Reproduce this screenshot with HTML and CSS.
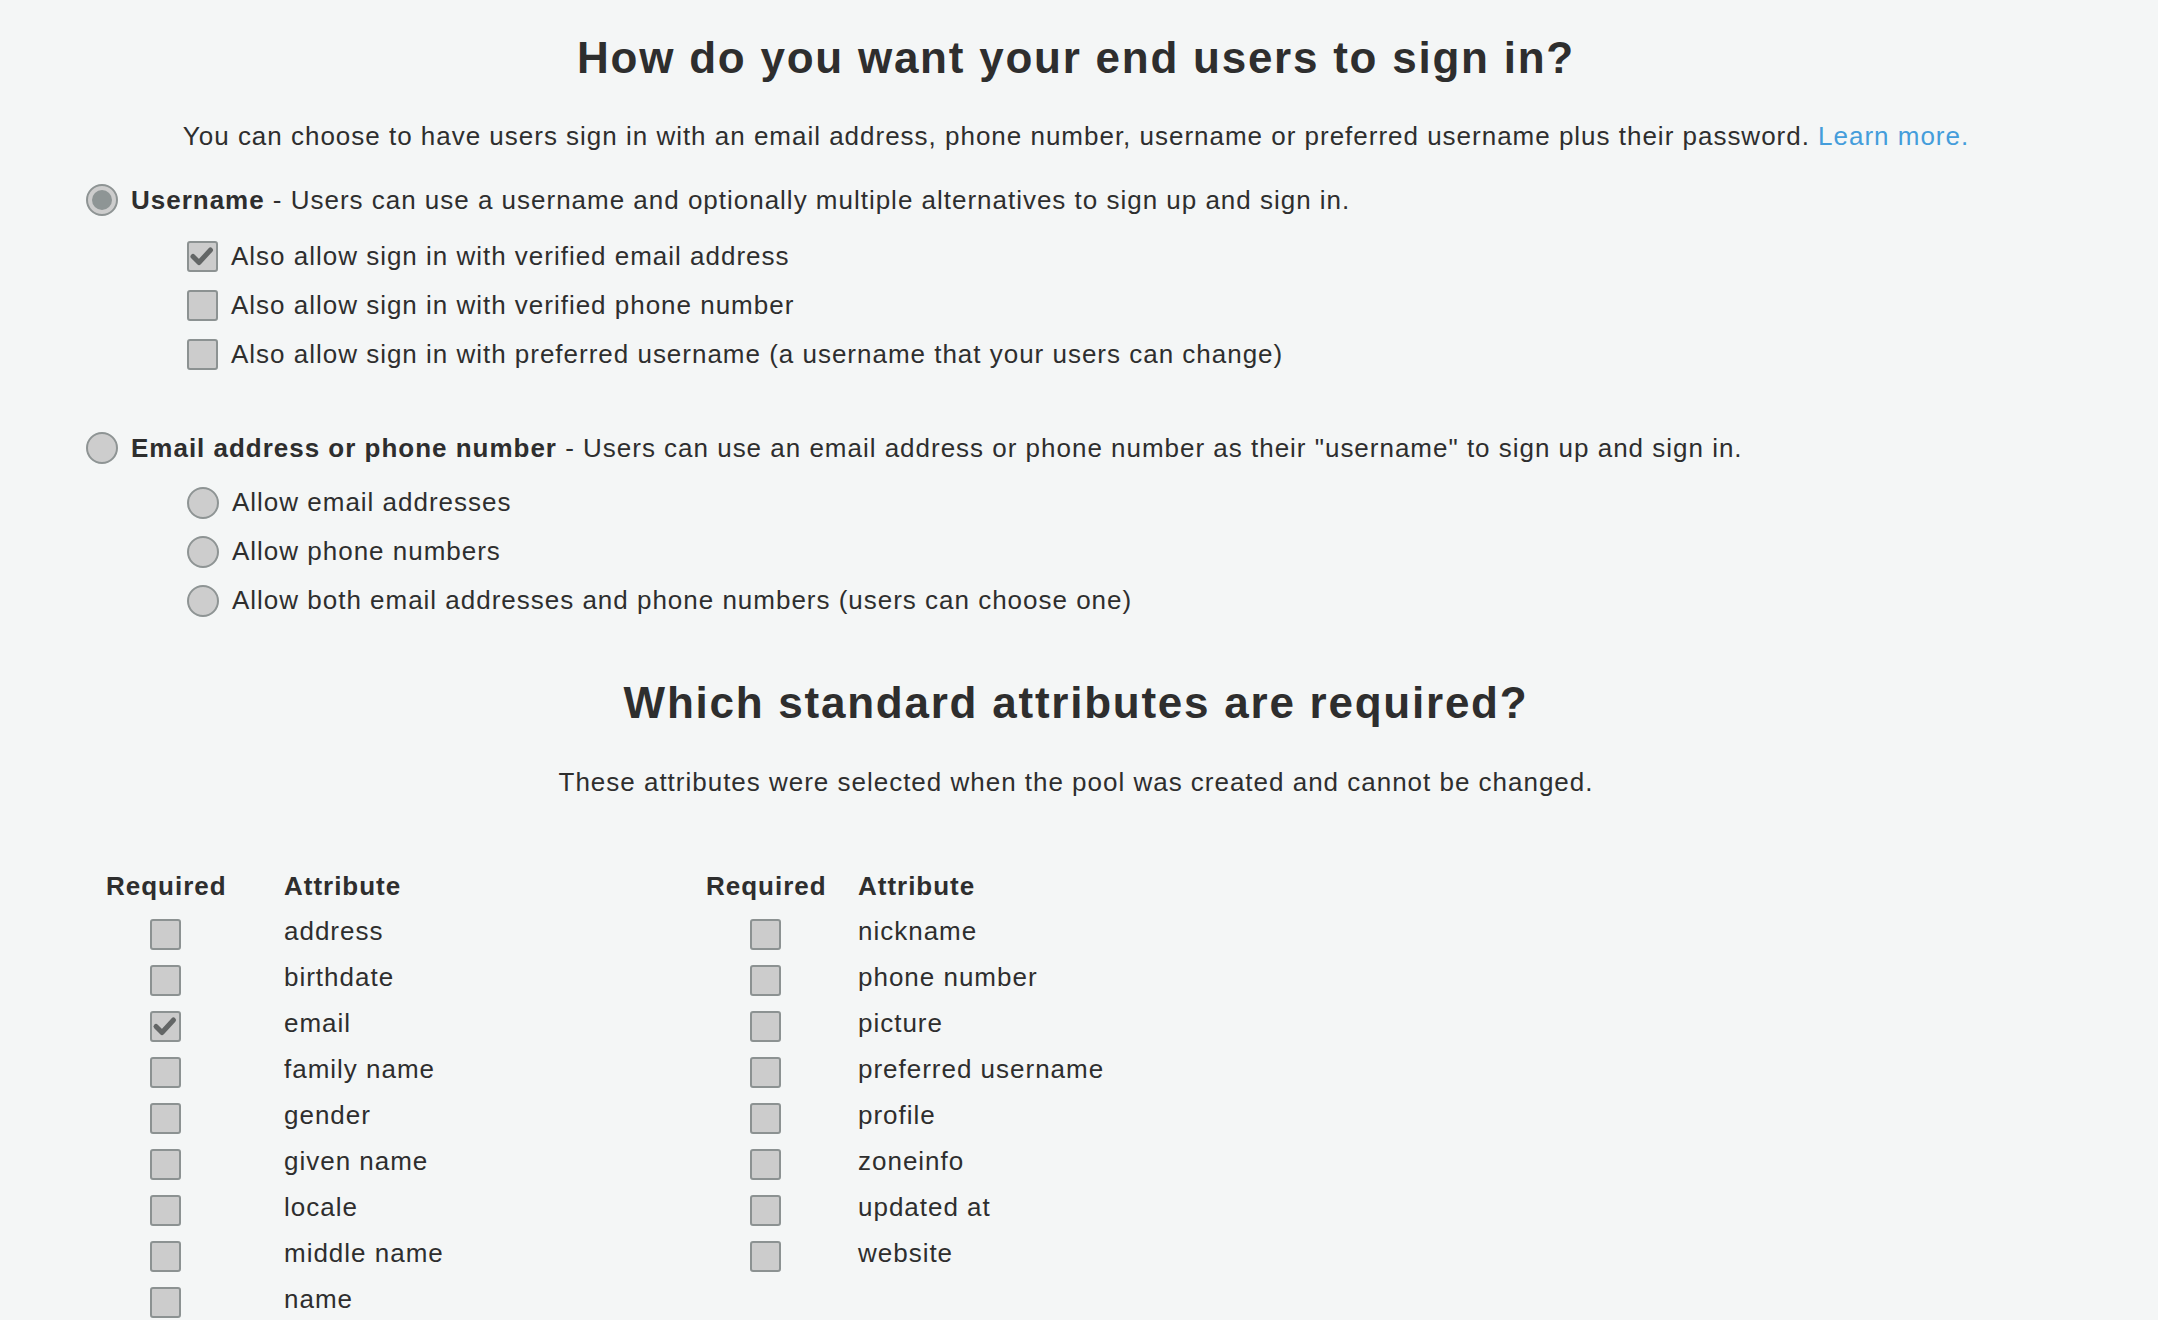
FILE: index.html
```html
<!DOCTYPE html>
<html lang="en">
<head>
<meta charset="utf-8">
<title>Sign in options</title>
<link rel="stylesheet" href="styles.css">
</head>
<body>
<main class="page">
  <h1 class="title">How do you want your end users to sign in?</h1>
  <p class="lead">You can choose to have users sign in with an email address, phone number, username or preferred username plus their password. <a class="link" href="#">Learn more.</a></p>

  <section class="group group-username">
    <div class="opt-row">
      <span class="radio radio-on"></span>
      <span class="opt-text"><b>Username</b> - Users can use a username and optionally multiple alternatives to sign up and sign in.</span>
    </div>
    <ul class="sub sub-checks">
      <li class="sub-row"><span class="check"><svg viewBox="0 0 27 27" width="27" height="27"><polyline points="4,13.5 10,19.5 21.5,7" fill="none" stroke="#636666" stroke-width="5" stroke-linecap="round" stroke-linejoin="round"/></svg></span><span>Also allow sign in with verified email address</span></li>
      <li class="sub-row"><span class="check"></span><span>Also allow sign in with verified phone number</span></li>
      <li class="sub-row"><span class="check"></span><span>Also allow sign in with preferred username (a username that your users can change)</span></li>
    </ul>
  </section>

  <section class="group group-email">
    <div class="opt-row">
      <span class="radio"></span>
      <span class="opt-text"><b>Email address or phone number</b> - Users can use an email address or phone number as their "username" to sign up and sign in.</span>
    </div>
    <ul class="sub sub-radios">
      <li class="sub-row"><span class="radio"></span><span>Allow email addresses</span></li>
      <li class="sub-row"><span class="radio"></span><span>Allow phone numbers</span></li>
      <li class="sub-row"><span class="radio"></span><span>Allow both email addresses and phone numbers (users can choose one)</span></li>
    </ul>
  </section>

  <h2 class="title title-2">Which standard attributes are required?</h2>
  <p class="lead lead-2">These attributes were selected when the pool was created and cannot be changed.</p>

  <div class="tables">
    <div class="attr-table attr-table-1">
      <div class="th">Required</div><div class="th">Attribute</div>
      <div class="req"><span class="check"></span></div><div class="attr">address</div>
      <div class="req"><span class="check"></span></div><div class="attr">birthdate</div>
      <div class="req"><span class="check"><svg viewBox="0 0 27 27" width="27" height="27"><polyline points="4,13.5 10,19.5 21.5,7" fill="none" stroke="#636666" stroke-width="5" stroke-linecap="round" stroke-linejoin="round"/></svg></span></div><div class="attr">email</div>
      <div class="req"><span class="check"></span></div><div class="attr">family name</div>
      <div class="req"><span class="check"></span></div><div class="attr">gender</div>
      <div class="req"><span class="check"></span></div><div class="attr">given name</div>
      <div class="req"><span class="check"></span></div><div class="attr">locale</div>
      <div class="req"><span class="check"></span></div><div class="attr">middle name</div>
      <div class="req"><span class="check"></span></div><div class="attr">name</div>
    </div>
    <div class="attr-table attr-table-2">
      <div class="th">Required</div><div class="th">Attribute</div>
      <div class="req"><span class="check"></span></div><div class="attr">nickname</div>
      <div class="req"><span class="check"></span></div><div class="attr">phone number</div>
      <div class="req"><span class="check"></span></div><div class="attr">picture</div>
      <div class="req"><span class="check"></span></div><div class="attr">preferred username</div>
      <div class="req"><span class="check"></span></div><div class="attr">profile</div>
      <div class="req"><span class="check"></span></div><div class="attr">zoneinfo</div>
      <div class="req"><span class="check"></span></div><div class="attr">updated at</div>
      <div class="req"><span class="check"></span></div><div class="attr">website</div>
    </div>
  </div>
</main>
</body>
</html>
```
FILE: styles.css
```css
html, body {
  margin: 0;
  padding: 0;
}

body {
  background: #f4f6f6;
  color: #2e2e2e;
  font-family: "Liberation Sans", Arial, Helvetica, sans-serif;
  font-size: 26px;
  letter-spacing: 0.038em;
  overflow: hidden;
}

.page {
  padding: 32px 92px 0 86px;
}

.title {
  margin: 0;
  text-align: center;
  font-size: 44px;
  line-height: 52px;
  font-weight: bold;
  letter-spacing: 0.04em;
  color: #2e2e2e;
}

.lead {
  margin: 34px 0 0;
  text-align: center;
  line-height: 36px;
}

.link {
  color: #449ddb;
  text-decoration: none;
}

.group-username {
  margin-top: 28px;
}

.group-email {
  margin-top: 51px;
}

.opt-row {
  display: flex;
  align-items: center;
  gap: 13px;
  height: 36px;
}

.opt-text b {
  font-weight: bold;
}

.sub {
  list-style: none;
  margin: 0;
  padding: 0 0 0 101px;
}

.sub-checks {
  margin-top: 14px;
}

.sub-radios {
  margin-top: 12px;
}

.sub-row {
  display: flex;
  align-items: center;
  gap: 13px;
  height: 49px;
}

.radio {
  box-sizing: border-box;
  flex: none;
  width: 32px;
  height: 32px;
  border-radius: 50%;
  border: 2px solid #8e9494;
  background: #cdcdcd;
  display: flex;
  align-items: center;
  justify-content: center;
}

.radio-on::after {
  content: "";
  width: 20px;
  height: 20px;
  border-radius: 50%;
  background: #8e9595;
}

.check {
  box-sizing: border-box;
  flex: none;
  width: 31px;
  height: 31px;
  border: 2px solid #8c9292;
  border-radius: 3px;
  background: #cccccc;
  display: flex;
  align-items: center;
  justify-content: center;
}

.check svg {
  display: block;
}

.title-2 {
  margin-top: 52px;
}

.lead-2 {
  margin-top: 35px;
}

.tables {
  display: flex;
  margin: 68px 0 0 20px;
}

.attr-table {
  display: grid;
  grid-template-rows: 40px;
  grid-auto-rows: 46px;
  align-items: center;
}

.attr-table-1 {
  width: 600px;
  grid-template-columns: 178px auto;
}

.attr-table-2 {
  grid-template-columns: 152px auto;
}

.th {
  font-weight: bold;
  height: 36px;
  line-height: 36px;
  align-self: start;
}

.req {
  width: 118px;
  display: flex;
  justify-content: center;
}

.req .check {
  margin-top: 6px;
}

.attr {
  line-height: 36px;
}
```
